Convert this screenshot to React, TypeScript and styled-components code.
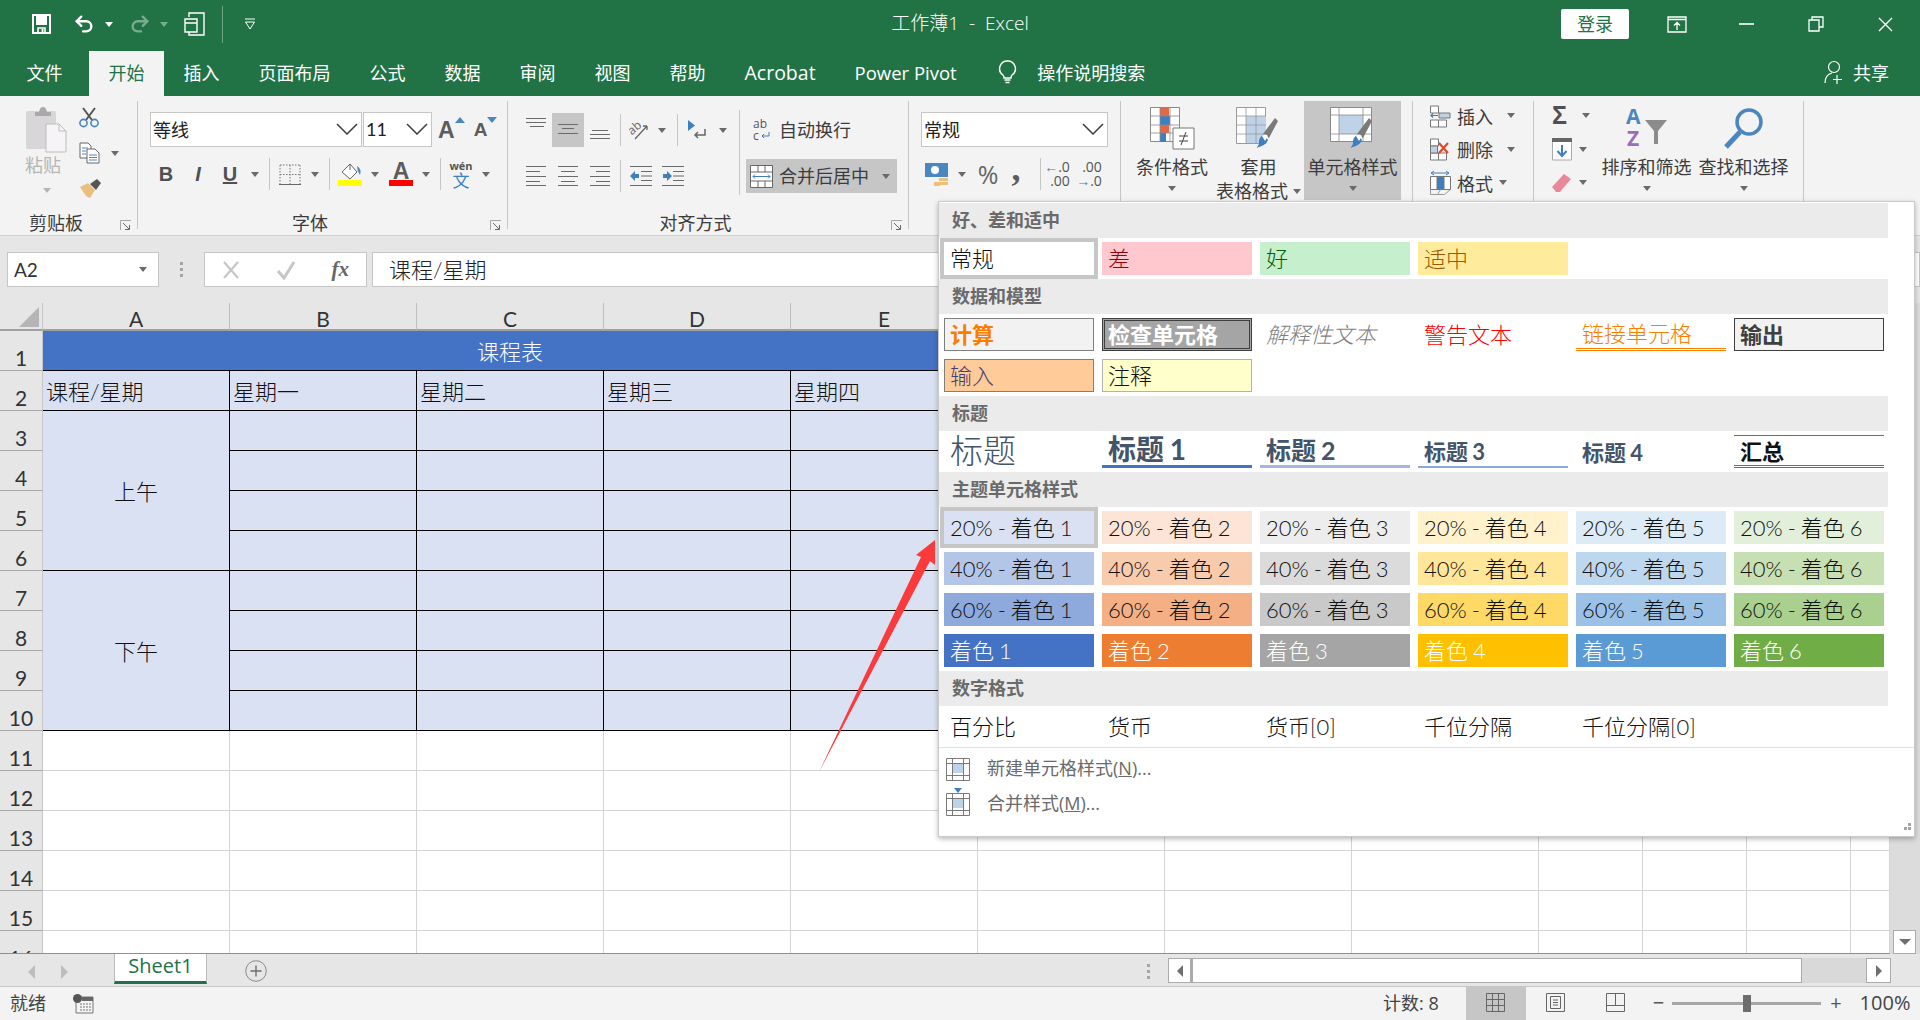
import React from "react";
import styled, { createGlobalStyle, css } from "styled-components";
import { Undo2, Redo2 } from "lucide-react";

const UI = `"Open Sans", "Noto Sans CJK SC", sans-serif`;
const CELL = `"Lato", "Noto Sans CJK SC", sans-serif`;
const GREEN = "#217346";

const Global = createGlobalStyle`
  html, body { margin: 0; padding: 0; background: #fff; }
  * { box-sizing: border-box; }
  #root { width: 1920px; height: 1020px; }
`;

const Page = styled.div`
  position: relative; width: 1920px; height: 1020px; overflow: hidden;
  display: flex; flex-direction: column; font-family: ${UI}; font-size: 18px; color: #444; font-weight: 400;
`;

const Svg = styled.svg`display: block; flex-shrink: 0;`;

/* ---- Title bar ---- */
const TitleBar = styled.div`
  height: 51px; background: ${GREEN}; color: #fff; display: grid; grid-template-columns: 1fr auto 1fr; align-items: center; padding-bottom: 3px;
`;
const Qat = styled.div`display: flex; align-items: center; padding-left: 32px;`;
const QatItem = styled.span<{ $ml?: number; $dim?: boolean }>`
  display: flex; align-items: center; margin-left: ${(p) => p.$ml ?? 0}px; opacity: ${(p) => (p.$dim ? 0.4 : 1)};
`;
const QatSep = styled.span`width: 1px; height: 37px; background: #6fa587; margin-left: 17px;`;
const Title = styled.div`color: #fff; font-size: 19px; line-height: 24px; margin-top: -3px; white-space: pre; font-weight: 300;`;
const WinCtl = styled.div`display: flex; align-items: center; justify-content: flex-end; padding-right: 27px;`;
const LoginBtn = styled.div`
  width: 68px; height: 30px; background: #fff; color: ${GREEN}; border-radius: 2px; display: flex; align-items: center; justify-content: center; font-size: 18px; font-weight: 400; padding-bottom: 2px;
`;
const WinBtn = styled.span<{ $ml: number }>`display: block; margin-left: ${(p) => p.$ml}px;`;

/* ---- Tabs ---- */
const TabBar = styled.div`height: 45px; background: ${GREEN}; display: flex; align-items: stretch; padding-left: 7px;`;
const Tab = styled.div<{ $on?: boolean; $mr?: number; $fs?: number }>`
  padding: 0 19.5px 3px; display: flex; align-items: center; white-space: nowrap; font-size: ${(p) => p.$fs ?? 18}px; margin-right: ${(p) => p.$mr ?? 0}px;
  color: ${(p) => (p.$on ? GREEN : "#fff")}; background: ${(p) => (p.$on ? "#f3f3f3" : "transparent")};
`;
const SearchHint = styled.div`display: flex; align-items: center; gap: 20px; color: #fff; margin-left: 22px; padding-bottom: 3px;`;
const Share = styled.div`display: flex; align-items: center; gap: 11px; color: #fff; margin-left: auto; padding: 0 31px 3px 0;`;

/* ---- Ribbon ---- */
const Ribbon = styled.div`height: 140px; background: #f3f3f3; border-bottom: 1px solid #d2d2d2; display: flex; align-items: flex-start; padding-top: 5px;`;
const Group = styled.section<{ $w: number }>`
  width: ${(p) => p.$w}px; height: 128px; border-right: 1px solid #c6c6c6; display: flex; flex-direction: column; flex-shrink: 0;
`;
const GroupBody = styled.div`height: 111px; display: flex; flex-shrink: 0;`;
const GroupLabel = styled.div`
  height: 20px; line-height: 20px; margin-top: 1px; display: grid; grid-template-columns: 1fr auto 1fr; align-items: center; font-size: 18px; color: #3c3c3c; padding-right: 25px; white-space: nowrap;
`;
const LauncherSlot = styled.span`justify-self: end; margin: 5px -20px 0 0;`;

const Caret = styled.span<{ $c?: string }>`
  display: block; width: 0; height: 0; flex-shrink: 0; border-left: 4.5px solid transparent; border-right: 4.5px solid transparent;
  border-top: 5px solid ${(p) => p.$c ?? "#6a6a6a"};
`;
const Tool = styled.div<{ $w: number; $on?: boolean }>`
  width: ${(p) => p.$w}px; height: 100%; display: flex; align-items: center; justify-content: center; flex-shrink: 0;
  background: ${(p) => (p.$on ? "#c6c6c6" : "transparent")};
`;
const ToolRow = styled.div<{ $mt?: number }>`display: flex; align-items: center; height: 34px; margin-top: ${(p) => p.$mt ?? 0}px;`;
const VSep = styled.span<{ $ml: number }>`width: 1px; height: 32px; background: #c6c6c6; margin-left: ${(p) => p.$ml}px; flex-shrink: 0;`;

/* clipboard */
const ClipRow = styled.div`display: flex; gap: 12px; padding: 6px 0 0 26px;`;
const PasteCol = styled.div`width: 41px; display: flex; flex-direction: column; align-items: center;`;
const PasteLabel = styled.div`color: #b5b5b5; line-height: 24px; margin: 0 0 11px -7px; white-space: nowrap;`;
const ClipTools = styled.div`display: flex; flex-direction: column; gap: 14px;`;
const ClipTool = styled.div`display: flex; align-items: center; gap: 11px;`;

/* font */
const FontWrap = styled.div`padding: 11px 0 0 12px; display: flex; flex-direction: column;`;
const ComboRow = styled.div`display: flex; align-items: center; height: 35px;`;
const Combo = styled.div<{ $w: number; $ml?: number }>`
  width: ${(p) => p.$w}px; height: 35px; margin-left: ${(p) => p.$ml ?? 0}px; background: #fff; border: 1px solid #c6c6c6; display: flex; align-items: center; justify-content: space-between;
  padding: 0 3px 2px 2px; font-family: ${CELL}; font-size: 18px; color: #222; flex-shrink: 0;
`;
const FontGrow = styled.div<{ $ml: number }>`display: flex; align-items: flex-start; margin-left: ${(p) => p.$ml}px; font: 700 23px/26px "Liberation Sans", sans-serif; color: #5c5c5c;`;
const FontSmall = styled(FontGrow)`font-size: 19px;`;
const FaceLetter = styled.span<{ $i?: boolean; $u?: boolean }>`
  font: ${(p) => (p.$i ? "italic 700" : "700")} 20px "Liberation Sans", sans-serif; color: #505050;
  text-decoration: ${(p) => (p.$u ? "underline" : "none")};
`;
const SwatchIcon = styled.div`display: flex; flex-direction: column; align-items: center; width: 24px;`;
const ColorLetter = styled.span`font: 700 23px/17px "Liberation Sans", sans-serif; color: #5c5c5c;`;
const ColorBar = styled.span<{ $c: string }>`display: block; width: 24px; height: 6px; background: ${(p) => p.$c};`;
const WenBox = styled.div`display: flex; flex-direction: column; align-items: center; line-height: 1;`;
const WenTop = styled.span`font: 700 11px/11px "Open Sans", sans-serif; color: #555;`;
const WenBottom = styled.span`font: 400 17px/17px "Noto Sans CJK SC", sans-serif; color: #3f7fc0;`;

/* alignment */
const AlignWrap = styled.div`display: flex; padding: 12px 0 0 12px;`;
const AlignLeft = styled.div`width: 219px;`;
const BigSep = styled.span`width: 1px; height: 85px; background: #c6c6c6; margin-top: -3px;`;
const AlignRight = styled.div`margin-left: 6px;`;
const WideBtn = styled.div<{ $on?: boolean }>`
  width: 151px; height: 34px; display: flex; align-items: center; white-space: nowrap; line-height: 28px;
  padding-left: ${(p) => (p.$on ? 4 : 7)}px; gap: ${(p) => (p.$on ? 6 : 9)}px; background: ${(p) => (p.$on ? "#c6c6c6" : "transparent")}; color: #3c3c3c;
`;
const CaretPad = styled.span<{ $ml: number }>`margin-left: ${(p) => p.$ml}px;`;

/* number */
const NumWrap = styled.div`padding: 11px 0 0 12px; display: flex; flex-direction: column;`;
const PercentMark = styled.span`font-size: 25px; color: #666;`;
const CommaMark = styled.span`font: 700 36px/20px "Liberation Serif", serif; color: #5c5c5c; margin-top: -13px;`;
const DecBox = styled.div`display: flex; flex-direction: column; font: 400 14px/14px "Open Sans", sans-serif; color: #555; text-align: right; white-space: pre;`;
const DecArrow = styled.span`color: #3f7fc0; font-weight: 700;`;

/* big buttons */
const BigRow = styled.div<{ $pl: number }>`display: flex; padding-left: ${(p) => p.$pl}px;`;
const BigBtn = styled.div<{ $w: number; $on?: boolean }>`
  width: ${(p) => p.$w}px; height: 99px; display: flex; flex-direction: column; align-items: center; padding-top: 6px; flex-shrink: 0; overflow: hidden;
  background: ${(p) => (p.$on ? "#c6c6c6" : "transparent")};
`;
const BigIcon = styled.div`height: 48px; display: flex; align-items: flex-start; justify-content: center; flex-shrink: 0;`;
const BigText = styled.div`line-height: 24px; height: 24px; white-space: nowrap; color: #3c3c3c; display: flex; align-items: center; gap: 5px; flex-shrink: 0;`;
const BigCaret = styled.span`margin-top: 7px;`;

/* cells */
const CellCmds = styled.div`display: flex; flex-direction: column; width: 100%; margin-top: -2px;`;
const CellCmd = styled.div`height: 33.5px; display: flex; align-items: center; padding-left: 17px; gap: 6px; color: #3c3c3c;`;
const EditCol = styled.div`width: 64px; padding-left: 18px; display: flex; flex-direction: column; flex-shrink: 0; margin-top: -2px;`;
const EditCmd = styled.div<{ $gap: number }>`height: 33.5px; display: flex; align-items: center; gap: ${(p) => p.$gap}px;`;
const Sigma = styled.span`font: 700 25px/25px "Liberation Sans", sans-serif; color: #505050; width: 18px;`;

/* ---- formula bar ---- */
const FormulaBar = styled.div`height: 67px; background: #e6e6e6; display: flex; align-items: flex-start; padding: 16px 0 0 7px;`;
const NameBox = styled.div`
  width: 152px; height: 35px; background: #fff; border: 1px solid #c6c6c6; display: flex; align-items: center; justify-content: space-between; padding: 0 11px 0 6px; font-size: 19px; color: #333; font-family: ${CELL};
`;
const BarDots = styled.div`width: 45px; height: 35px; display: flex; flex-direction: column; align-items: center; justify-content: center; gap: 3px;`;
const BarDot = styled.span`width: 3px; height: 3px; background: #a5a5a5;`;
const FnBox = styled.div`
  width: 163px; height: 35px; background: #fff; border: 1px solid #c6c6c6; display: flex; align-items: center; justify-content: space-between; padding: 0 17px;
`;
const FxMark = styled.span`font: italic 700 21px "Liberation Serif", serif; color: #666;`;
const FormulaInput = styled.div`
  flex: 1; height: 35px; margin-left: 5px; background: #fff; border: 1px solid #c6c6c6; display: flex; align-items: center; padding: 0 0 4px 16px; font: 300 22px ${CELL}; color: #222;
`;

/* ---- sheet ---- */
const SheetRow = styled.div`display: flex; height: 651px;`;
const SheetGrid = styled.div`
  width: 1890px; height: 651px; overflow: hidden; display: grid; border-bottom: 1px solid #8e8e8e;
  grid-template-columns: 43px repeat(8, 187px) 104px 104px 104px 39px;
  grid-template-rows: 28px repeat(16, 40px); font-family: ${CELL}; color: #222;
`;
const Corner = styled.div`background: #e6e6e6; border-right: 1px solid #c6c6c6; border-bottom: 2px solid #a0a0a0; display: flex; align-items: flex-end; justify-content: flex-end; padding: 0 3px 2px 0;`;
const ColHead = styled.div`
  background: #e6e6e6; border-right: 1px solid #bdbdbd; border-bottom: 2px solid #a0a0a0; display: flex; align-items: center; justify-content: center; font-size: 21px; color: #333; padding-top: 4px;
`;
const RowHead = styled.div`
  background: #e6e6e6; border-right: 1px solid #c6c6c6; border-bottom: 1px solid #a8a8a8; display: flex; align-items: flex-end; justify-content: center; font-size: 21px; line-height: 24px; color: #333;
`;
const Cell = styled.div<{ $span?: number; $rows?: number; $table?: boolean; $title?: boolean; $center?: boolean }>`
  grid-column: span ${(p) => p.$span ?? 1}; grid-row: span ${(p) => p.$rows ?? 1};
  display: flex; font-size: 22px; font-weight: 300; color: #111; white-space: nowrap;
  border-right: 1px solid #d4d4d4; border-bottom: 1px solid #d4d4d4; background: #fff;
  ${(p) => p.$table && css`background: #d9e1f2; border-right-color: #000; border-bottom-color: #000; align-items: flex-end; padding: 0 0 4px 3px; line-height: 28px;`}
  ${(p) => p.$center && css`align-items: center; justify-content: center; padding: 2px 0 0;`}
  ${(p) => p.$title && css`background: #4472c4; color: #fff; align-items: center; justify-content: center; border-right-color: #000; border-bottom-color: #000; padding: 0 0 2px;`}
`;
const VScroll = styled.div`width: 30px; height: 651px; background: #dcdcdc; display: flex; align-items: flex-end; padding: 0 4px 0 3px;`;
const ScrollBtnV = styled.div`width: 23px; height: 24px; background: #fff; border: 1px solid #ababab; display: flex; align-items: center; justify-content: center;`;

/* ---- sheet tabs ---- */
const SheetTabs = styled.div`height: 33px; background: #e6e6e6; display: flex; align-items: flex-start; padding: 0 29px 0 28px; border-bottom: 1px solid #c6c6c6;`;
const NavArrow = styled.span<{ $ml?: number; $left?: boolean }>`
  display: block; width: 0; height: 0; margin: 11px 0 0 ${(p) => p.$ml ?? 0}px; border-top: 7px solid transparent; border-bottom: 7px solid transparent;
  ${(p) => (p.$left ? "border-right: 7px solid #bdbdbd;" : "border-left: 7px solid #bdbdbd;")}
`;
const SheetTab = styled.div`
  margin-left: 46px; width: 93px; height: 30px; background: #fff; border-left: 1px solid #bcbcbc; border-right: 1px solid #bcbcbc; border-bottom: 3px solid ${GREEN};
  color: ${GREEN}; font-size: 20px; line-height: 24px; display: flex; align-items: center; justify-content: center; padding-bottom: 3px;
`;
const AddSheet = styled.span`margin: 6px 0 0 38px; display: block;`;
const TabDots = styled.div`margin: 5px 18px 0 auto; display: flex; flex-direction: column; gap: 3px; padding-top: 5px;`;
const HScroll = styled.div`display: flex; height: 25px; margin-top: 4px; width: 723px;`;
const HBtn = styled.div<{ $w: number }>`width: ${(p) => p.$w}px; height: 25px; background: #fff; border: 1px solid #ababab; display: flex; align-items: center; justify-content: center; flex-shrink: 0;`;
const HThumb = styled.div`width: 611px; background: #fff; border: 1px solid #ababab; border-left-width: 2px;`;
const HTrack = styled.div`flex: 1; background: #d9d9d9;`;
const ScrollArrow = styled.span<{ $dir: "l" | "r" | "d" }>`
  display: block; width: 0; height: 0;
  ${(p) => p.$dir === "l" && "border-top: 6px solid transparent; border-bottom: 6px solid transparent; border-right: 6px solid #6e6e6e;"}
  ${(p) => p.$dir === "r" && "border-top: 6px solid transparent; border-bottom: 6px solid transparent; border-left: 6px solid #6e6e6e;"}
  ${(p) => p.$dir === "d" && "border-left: 6px solid transparent; border-right: 6px solid transparent; border-top: 6px solid #6e6e6e;"}
`;

/* ---- status bar ---- */
const StatusBar = styled.div`height: 33px; background: #f3f3f3; display: flex; align-items: center; padding: 0 11px 0 10px; font-size: 18px; color: #444;`;
const StatusText = styled.span<{ $ml?: number }>`margin: -4px 0 0 ${(p) => p.$ml ?? 0}px; white-space: nowrap;`;
const ViewBtn = styled.div<{ $on?: boolean }>`width: 60px; height: 33px; display: flex; align-items: center; justify-content: center; padding-bottom: 2px; background: ${(p) => (p.$on ? "#c6c6c6" : "transparent")};`;
const SliderTrack = styled.div`position: relative; width: 149px; height: 3px; background: #a6a6a6; margin: 0 9px 0 8px;`;
const SliderThumb = styled.span`position: absolute; left: 71px; top: -7px; width: 8px; height: 17px; background: #6d6d6d;`;
const ZoomSign = styled.span`font-size: 20px; color: #555; margin-top: -3px;`;
const ZoomPct = styled.span`margin: -3px 0 0 18px; font-size: 20px;`;

/* ---- cell styles popup ---- */
const Popup = styled.div`
  position: absolute; left: 938px; top: 201px; width: 977px; height: 636px; background: #fff; border: 1px solid #c9c9c9; box-shadow: 0 2px 5px rgba(0,0,0,.28); padding-top: 1px; display: flex; flex-direction: column; z-index: 5;
`;
const SectionHead = styled.div`
  width: 949px; height: 35px; background: #ebebeb; display: flex; align-items: center; padding: 0 0 4px 13px; font-size: 18px; font-weight: 700; color: #6a6a6a;
`;
const SectionRows = styled.div`display: grid; grid-template-columns: repeat(6, 150px); column-gap: 8px; row-gap: 8px; padding: 4px 5px; width: 949px;`;
const StyleCell = styled.div<{ $v: string; $sel?: boolean }>`
  height: 33px; display: flex; align-items: center; padding: 0 0 3px 6px; white-space: nowrap; font-size: 22px; font-weight: 300; word-spacing: -1px; color: #111; font-family: ${CELL};
  ${(p) => p.$sel && css`box-shadow: 0 0 0 4px #c6c6c6;`}
  ${(p) => variants[p.$v]}
`;
const PopupLine = styled.div`height: 1px; background: #e1e1e1; margin-bottom: 1px;`;
const MenuItem = styled.div`height: 35px; display: flex; align-items: center; padding-left: 7px; gap: 17px; font-size: 18px; color: #6a6a6a;`;
const Grip = styled.div`margin: auto 3px 2px auto; display: grid; grid-template-columns: repeat(3, 3px); grid-template-rows: repeat(3, 3px); gap: 1px;`;
const GripDot = styled.span<{ $show: boolean }>`background: ${(p) => (p.$show ? "#a5a5a5" : "transparent")};`;

const Annotation = styled.svg`position: absolute; left: 810px; top: 525px; z-index: 6;`;

const variants: Record<string, any> = {
  normal: css`background: #fff;`,
  bad: css`background: #ffc7ce; color: #9c0006;`,
  good: css`background: #c6efce; color: #006100;`,
  neutral: css`background: #ffeb9c; color: #9c5700;`,
  calc: css`background: #f2f2f2; color: #fa7d00; font-weight: 700; border: 1px solid #7f7f7f; padding-left: 5px;`,
  check: css`background: #a5a5a5; color: #fff; font-weight: 700; border: 3px double #3f3f3f; padding-left: 3px;`,
  explain: css`color: #7f7f7f; font-style: italic;`,
  warn: css`color: #ff0000;`,
  link: css`color: #fa7d00; border-bottom: 3px double #ff8001;`,
  output: css`background: #f2f2f2; color: #3f3f3f; font-weight: 700; border: 1px solid #3f3f3f; padding-left: 5px;`,
  input: css`background: #ffcc99; color: #3f3f76; border: 1px solid #7f7f7f; padding-left: 5px;`,
  note: css`background: #ffffcc; color: #111; border: 1px solid #b2b2b2; padding-left: 5px;`,
  h0: css`color: #44546a; font-size: 33px; font-weight: 300; padding-bottom: 6px;`,
  h1: css`color: #44546a; font-size: 28px; font-weight: 700; border-bottom: 3px solid #4472c4; padding-bottom: 4px;`,
  h2: css`color: #44546a; font-size: 25px; font-weight: 700; border-bottom: 3px solid #a2b8e1; padding-bottom: 2px;`,
  h3: css`color: #44546a; font-size: 22px; font-weight: 700; border-bottom: 2px solid #8ea9db; padding-bottom: 1px;`,
  h4: css`color: #44546a; font-size: 22px; font-weight: 700; padding-bottom: 1px;`,
  total: css`color: #111; font-weight: 700; border-top: 1px solid #4472c4; border-bottom: 3px double #4472c4; padding-bottom: 1px;`,
  number: css`background: #fff;`,
};
const fill = (bg: string, fg = "#111") => css`background: ${bg}; color: ${fg};`;
const themeColors = [
  ["#d9e1f2", "#fce4d6", "#ededed", "#fff2cc", "#ddebf7", "#e2efda"],
  ["#b4c6e7", "#f8cbad", "#dbdbdb", "#ffe699", "#bdd7ee", "#c6e0b4"],
  ["#8ea9db", "#f4b084", "#c9c9c9", "#ffd966", "#9bc2e6", "#a9d08e"],
  ["#4472c4", "#ed7d31", "#a5a5a5", "#ffc000", "#5b9bd5", "#70ad47"],
];
const prefixes = ["20% - ", "40% - ", "60% - ", ""];
themeColors.forEach((r, i) => r.forEach((c, j) => { variants[`t${i}${j}`] = fill(c, i === 3 ? "#fff" : "#111"); }));

type StyleDef = [string, string];
const sections: { title: string; cells: StyleDef[] }[] = [
  { title: "好、差和适中", cells: [["常规", "normal"], ["差", "bad"], ["好", "good"], ["适中", "neutral"]] },
  { title: "数据和模型", cells: [["计算", "calc"], ["检查单元格", "check"], ["解释性文本", "explain"], ["警告文本", "warn"], ["链接单元格", "link"], ["输出", "output"], ["输入", "input"], ["注释", "note"]] },
  { title: "标题", cells: [["标题", "h0"], ["标题 1", "h1"], ["标题 2", "h2"], ["标题 3", "h3"], ["标题 4", "h4"], ["汇总", "total"]] },
  { title: "主题单元格样式", cells: themeColors.flatMap((r, i) => r.map((_, j) => [`${prefixes[i]}着色 ${j + 1}`, `t${i}${j}`] as StyleDef)) },
  { title: "数字格式", cells: [["百分比", "number"], ["货币", "number"], ["货币[0]", "number"], ["千位分隔", "number"], ["千位分隔[0]", "number"]] },
];

/* ---- icons ---- */
const Chevron = () => (
  <Svg width="22" height="12" viewBox="0 0 22 12"><path d="M1 1l10 10L21 1" fill="none" stroke="#3c3c3c" strokeWidth="1.5" /></Svg>
);
const Launcher = () => (
  <Svg width="12" height="11" viewBox="0 0 12 11"><path d="M.5 10V.5H11" fill="none" stroke="#a6a6a6" /><path d="M3 3l6 6M5 9.500h4.500V5" fill="none" stroke="#666" /></Svg>
);
const SaveIcon = () => (
  <Svg width="19" height="20" viewBox="0 0 19 20"><path d="M1 1h17v18H1z" fill="none" stroke="#fff" strokeWidth="2" /><path d="M4 1h11v10H4z" fill="#fff" /><path d="M6 19v-5h7v5" fill="none" stroke="#fff" strokeWidth="1.6" /><path d="M9.500 15h2v3h-2z" fill="#fff" /></Svg>
);
const TouchIcon = () => (
  <Svg width="21" height="24" viewBox="0 0 21 24"><path d="M5 5V1h15v22H5v-3" fill="none" stroke="#fff" strokeWidth="1.4" /><path d="M1 7h12v13H1zM1 11h12" fill="none" stroke="#fff" strokeWidth="1.4" /></Svg>
);
const QatMore = () => (
  <Svg width="12" height="12" viewBox="0 0 12 12"><path d="M1 1h10M1.500 4h9L6 11z" fill="none" stroke="#fff" strokeWidth="1" /></Svg>
);
const RibbonDisplay = () => (
  <Svg width="20" height="17" viewBox="0 0 20 17"><path d="M1 1h18v15H1zM1 3.500h18M10 14V7M7 9.500L10 6.500l3 3" fill="none" stroke="#fff" strokeWidth="1.3" /></Svg>
);
const Minimize = () => <Svg width="15" height="2" viewBox="0 0 15 2"><path d="M0 1h15" stroke="#fff" strokeWidth="1.6" /></Svg>;
const Restore = () => (
  <Svg width="16" height="16" viewBox="0 0 16 16"><path d="M1 4h10v11H1zM4 4V1h11v10h-4" fill="none" stroke="#fff" strokeWidth="1.3" /></Svg>
);
const CloseIcon = () => <Svg width="15" height="15" viewBox="0 0 15 15"><path d="M1 1l13 13M14 1L1 14" stroke="#fff" strokeWidth="1.4" /></Svg>;
const Bulb = () => (
  <Svg width="19" height="24" viewBox="0 0 19 24"><path d="M9.500 1a7.700 7.700 0 0 0-4.600 14c.8.7 1.100 1.600 1.100 3h7c0-1.400.3-2.300 1.100-3A7.700 7.700 0 0 0 9.500 1z" fill="none" stroke="#fff" strokeWidth="1.4" /><path d="M6.500 20h6M7.500 22.500h4" stroke="#fff" strokeWidth="1.6" /></Svg>
);
const PersonPlus = () => (
  <Svg width="18" height="24" viewBox="0 0 18 24"><circle cx="10" cy="7" r="5.500" fill="none" stroke="#fff" strokeWidth="1.2" /><path d="M1 23c0-6 3-9 7-10M13 15v9M9 19.500h9" fill="none" stroke="#fff" strokeWidth="1.2" /></Svg>
);
const PasteIcon = () => (
  <Svg width="41" height="46" viewBox="0 0 41 46"><path d="M0 6q0-2 2-2h26q2 0 2 2v34q0 2-2 2H2q-2 0-2-2z" fill="#d9d6d9" /><path d="M9 5h4q1-5 4-5t4 5h4v4H9z" fill="#a9a9a9" /><path d="M20 17h13l7 7v21H20z" fill="#f6f4f6" stroke="#bdbdbd" /><path d="M33 17v7h7" fill="none" stroke="#bdbdbd" /></Svg>
);
const CutIcon = () => (
  <Svg width="20" height="21" viewBox="0 0 20 21"><path d="M7 13L16 1M13 13L4 1" stroke="#555" strokeWidth="2" /><circle cx="4.500" cy="16" r="3.600" fill="none" stroke="#4a86c0" strokeWidth="1.6" /><circle cx="15.500" cy="16" r="3.600" fill="none" stroke="#4a86c0" strokeWidth="1.6" /></Svg>
);
const CopyIcon = () => (
  <Svg width="21" height="22" viewBox="0 0 21 22"><path d="M1 1h8l3 3v12H1z" fill="#fff" stroke="#666" /><path d="M8 7h8l4 4v10H8z" fill="#fff" stroke="#666" /><path d="M3 6h6M3 9h4M3 12h4M10 13h8M10 15.500h8M10 18h8" stroke="#4a86c0" /></Svg>
);
const PainterIcon = () => (
  <Svg width="23" height="20" viewBox="0 0 23 20"><path d="M1 9l8-4 7 7-5 8-4-2z" fill="#e9bf7e" /><path d="M11 6l7-5 4 4-5 7z" fill="#555" /></Svg>
);
const BorderIcon = () => (
  <Svg width="22" height="21" viewBox="0 0 22 21"><path d="M1 1h20M1 10.500h20M1 1v19M11 1v19M21 1v19" fill="none" stroke="#777" strokeDasharray="1.5 1.5" /><path d="M0 20.500h22" stroke="#666" /></Svg>
);
const BucketIcon = () => (
  <Svg width="24" height="17" viewBox="0 0 24 17"><path d="M4 9l8-8 7 8-7 7z" fill="#fff" stroke="#666" /><path d="M12 1v6" stroke="#666" /><path d="M19 3q5 3 3 9-3-4-3-9z" fill="#4a86c0" /></Svg>
);
const Lines = ({ rows, w = 20, h, c = "#6a6a6a" }: { rows: [number, number, number][]; w?: number; h: number; c?: string }) => (
  <Svg width={w} height={h} viewBox={`0 0 ${w} ${h}`}>{rows.map(([x, y, l], i) => <rect key={i} x={x} y={y} width={l} height="1" fill={c} />)}</Svg>
);
const OrientIcon = () => (
  <Svg width="20" height="20" viewBox="0 0 20 20"><text x="0" y="12" fontSize="12" fontFamily="Open Sans" fill="#666" transform="rotate(-40 6 10)">ab</text><path d="M6 19L18 6M18 6l-4 0M18 6v4" fill="none" stroke="#666" strokeWidth="1.3" /></Svg>
);
const IndentWrap = () => (
  <Svg width="18" height="20" viewBox="0 0 18 20"><path d="M0 0l7 5.500L0 11z" fill="#3f7fc0" /><path d="M17 9v6H7M10 12l-3 3 3 3" fill="none" stroke="#666" strokeWidth="1.5" /></Svg>
);
const WrapText = () => (
  <Svg width="17" height="22" viewBox="0 0 17 22"><text x="0" y="9" fontSize="12" fontFamily="Open Sans" fill="#555">ab</text><text x="0" y="21" fontSize="12" fontFamily="Open Sans" fill="#555">c</text><path d="M16 13v4H9M11 15l-2 2 2 2" fill="none" stroke="#3f7fc0" /></Svg>
);
const MergeIcon = () => (
  <Svg width="23" height="23" viewBox="0 0 23 23"><path d="M.5.500h22v22H.5z" fill="#fff" stroke="#666" /><path d="M0 7h23M0 16h23M8 0v7M15 0v7M8 16v7M15 16v7" stroke="#666" /><path d="M3 11.500h17M5 9.500l-2 2 2 2M18 9.500l2 2-2 2" fill="none" stroke="#3f7fc0" /></Svg>
);
const IndentIcon = ({ out }: { out?: boolean }) => (
  <Svg width="22" height="20" viewBox="0 0 22 20">
    <path d="M0 .5h22M11 5.500h11M11 10h11M11 14.500h11M0 19.500h22" stroke="#6a6a6a" />
    <path d={out ? "M0 10l5-5v3h4v4H5v3z" : "M10 10L5 5v3H1v4h4v3z"} fill="#3f7fc0" />
  </Svg>
);
const CurrencyIcon = () => (
  <Svg width="23" height="23" viewBox="0 0 23 23"><path d="M0 0h23v14H0z" fill="#4a86c0" /><circle cx="10" cy="7" r="4" fill="#fff" /><path d="M14 15h9v3h-9zM14 19h9v3h-9zM9 19h6v4H9z" fill="#ecc07a" /></Svg>
);
const CondIcon = () => (
  <Svg width="45" height="43" viewBox="0 0 45 43">
    <path d="M.5.500h29v34H.5z" fill="#fff" stroke="#8a8a8a" />
    <path d="M10 1h9v8h-9zM10 18h9v8h-9z" fill="#e0694a" /><path d="M10 9h10v9H10zM10 26h6v9h-6z" fill="#3f7fc0" />
    <path d="M10 1v34M20 1v34M0 9h30M0 18h30M0 26h30" stroke="#8a8a8a" strokeWidth=".8" fill="none" />
    <path d="M23 21h21v21H23z" fill="#fff" stroke="#777" /><path d="M29 29h9M29 34h9M36 25l-5 13" stroke="#444" />
  </Svg>
);
const Brush = ({ x, y }: { x: number; y: number }) => (
  <g transform={`translate(${x} ${y})`}><path d="M4 28q-1-7 5-9l4 5q-2 6-13 8 3-1 4-4z" fill="#3f7fc0" /><path d="M8 18L20 2l3 3-9 17z" fill="#7a7a7a" /><path d="M7 20q3-3 6 0l-3 5z" fill="#fff" /></g>
);
const TableStyleIcon = () => (
  <Svg width="46" height="43" viewBox="0 0 46 43">
    <path d="M.5.500h29v36H.5z" fill="#fff" stroke="#9a9a9a" /><path d="M10 9h20v27H10z" fill="#bed2e8" />
    <path d="M10 1v36M20 1v36M0 9h30M0 18h30M0 27h30" stroke="#9a9a9a" strokeWidth=".8" fill="none" />
    <Brush x={19} y={9} />
  </Svg>
);
const CellStyleIcon = () => (
  <Svg width="46" height="43" viewBox="0 0 46 43">
    <path d="M.5.500h41v34H.5z" fill="#fff" stroke="#8a8a8a" /><path d="M9 8h24v19H9z" fill="#bed2e8" />
    <path d="M9 1v33M33 1v33M0 8h42M0 27h42" stroke="#8a8a8a" strokeWidth=".8" fill="none" />
    <Brush x={19} y={9} />
  </Svg>
);
const SmallGrid = ({ kind }: { kind: "ins" | "del" | "fmt" }) => (
  <Svg width="21" height="24" viewBox="0 0 21 24">
    {kind !== "fmt" && <path d="M.5 2h8v7h-8zM.5 16h8v7h-8zM8.500 16h8v7h-8z" fill="#fff" stroke="#777" />}
    {kind === "ins" && <><path d="M9 9h11v5H9z" fill="#bed2e8" stroke="#777" /><path d="M8 11.500H1M3 9.500l-2 2 2 2" fill="none" stroke="#3f7fc0" strokeWidth="1.200" /></>}
    {kind === "del" && <><path d="M.5 9h7v7h-7z" fill="#bed2e8" stroke="#777" /><path d="M9 6l9 10M18 6L9 16" stroke="#e0492a" strokeWidth="2.200" /></>}
    {kind === "fmt" && <>
      <path d="M1 2h18M4 0l-3 2 3 2M16 0l3 2-3 2" fill="none" stroke="#3f7fc0" />
      <path d="M.5 5.500h20v13H.5z" fill="#fff" stroke="#777" /><path d="M7 6h7v12H7z" fill="#3f7fc0" />
      <path d="M7 5.500v13M14 5.500v13" stroke="#777" /><path d="M.5 18.500v5h7l3-5M20.500 18.500l-6 5H7.500" fill="none" stroke="#999" />
    </>}
  </Svg>
);
const FillDown = () => (
  <Svg width="20" height="23" viewBox="0 0 20 23"><path d="M.5 3h19v19H.5z" fill="#fff" stroke="#aaa" /><path d="M0 0h20v4H0z" fill="#666" /><path d="M10 7v11M5.500 13l4.500 5 4.500-5" fill="none" stroke="#3f7fc0" strokeWidth="2" /></Svg>
);
const Eraser = () => (
  <Svg width="20" height="20" viewBox="0 0 20 20"><path d="M0 14L12 1l7 5L8 19H4z" fill="#e8899a" /></Svg>
);
const SortIcon = () => (
  <Svg width="42" height="40" viewBox="0 0 42 40">
    <text x="0" y="17" fontSize="21" fontWeight="700" fontFamily="Open Sans" fill="#4a86c0">A</text>
    <text x="1" y="39" fontSize="21" fontWeight="700" fontFamily="Open Sans" fill="#9b6bbd">Z</text>
    <path d="M19 13h22l-9 11v13h-4V24z" fill="#8c8c8c" />
  </Svg>
);
const FindIcon = () => (
  <Svg width="40" height="42" viewBox="0 0 40 42"><circle cx="25" cy="15" r="12" fill="none" stroke="#4a86c0" strokeWidth="3.500" /><path d="M16 25L2 40" stroke="#4a86c0" strokeWidth="5" /></Svg>
);
const CrossMark = () => <Svg width="18" height="20" viewBox="0 0 18 20"><path d="M2 2l14 16M16 2L2 18" stroke="#c6c6c6" strokeWidth="2.200" /></Svg>;
const CheckMark = () => <Svg width="20" height="20" viewBox="0 0 20 20"><path d="M2 11l6 7 10-16" fill="none" stroke="#c6c6c6" strokeWidth="3" /></Svg>;
const CornerMark = () => <Svg width="20" height="20" viewBox="0 0 20 20"><path d="M20 0v20H0z" fill="#b5b5b5" /></Svg>;
const PlusCircle = () => (
  <Svg width="22" height="22" viewBox="0 0 22 22"><circle cx="11" cy="11" r="10.300" fill="none" stroke="#8a8a8a" /><path d="M11 5.500v11M5.500 11h11" stroke="#6e6e6e" strokeWidth="1.400" /></Svg>
);
const MacroIcon = () => (
  <Svg width="21" height="20" viewBox="0 0 21 20"><path d="M3 3h17v16H3z" fill="#f3f3f3" stroke="#777" /><path d="M9 3h11v4H9z" fill="#666" /><circle cx="4.500" cy="4.500" r="4.500" fill="#555" /><path d="M7 10h11M7 13h11M7 16h11" stroke="#777" strokeDasharray="2 1" /></Svg>
);
const ViewNormal = () => <Svg width="19" height="19" viewBox="0 0 19 19"><path d="M.5.500h18v18H.5zM.5 6.500h18M.5 12.500h18M6.500.5v18M12.500.5v18" fill="none" stroke="#666" /></Svg>;
const ViewPage = () => <Svg width="19" height="19" viewBox="0 0 19 19"><path d="M.5.500h18v18H.5zM4.500 3.500h10v12h-10z" fill="none" stroke="#666" /><path d="M7 7h5M7 9.500h5M7 12h5" stroke="#666" /></Svg>;
const ViewBreak = () => <Svg width="19" height="19" viewBox="0 0 19 19"><path d="M.5.500h18v18H.5zM.5 12.500h18M9.500.5v12" fill="none" stroke="#666" /></Svg>;
const MenuNewIcon = ({ merge }: { merge?: boolean }) => (
  <Svg width="24" height="28" viewBox="0 0 24 28">
    {merge && <path d="M8 0h8l-4 5z" fill="#3f7fc0" />}
    <path d="M7 10h10v10H7z" fill="#bed2e8" />
    <path d="M.5 5.500h23v22H.5zM.5 10.500h23M.5 22.500h23M6.500 5.500v22M17.500 5.500v22" fill="none" stroke="#7a7a7a" />
  </Svg>
);

const alignV = {
  top: [[0, 5, 20], [0, 9, 20], [4, 13, 14]] as [number, number, number][],
  mid: [[0, 11, 20], [4, 15, 12], [0, 20, 20]] as [number, number, number][],
  bot: [[2, 17, 16], [0, 21, 20], [0, 25, 20]] as [number, number, number][],
};
const alignH = {
  l: [[0, 1, 20], [0, 6, 14], [0, 11, 20], [0, 16, 14], [0, 20, 20]] as [number, number, number][],
  c: [[0, 1, 20], [3, 6, 14], [0, 11, 20], [3, 16, 14], [0, 20, 20]] as [number, number, number][],
  r: [[0, 1, 20], [6, 6, 14], [0, 11, 20], [6, 16, 14], [0, 20, 20]] as [number, number, number][],
};

const tabs: [string, number?][] = [["插入"], ["页面布局"], ["公式"], ["数据"], ["审阅"], ["视图"], ["帮助"], ["Acrobat", 19.5], ["Power Pivot", 18.5]];
const colHeads = ["A", "B", "C", "D", "E", "F", "G", "H", "I", "J", "K", "L"];
const week = ["课程/星期", "星期一", "星期二", "星期三", "星期四"];
const blanksRight = Array.from({ length: 7 });

function SheetBody() {
  const rows: React.ReactNode[] = [];
  for (let r = 1; r <= 16; r++) {
    rows.push(<RowHead key={`h${r}`}>{r}</RowHead>);
    if (r === 1) rows.push(<Cell key="title" $span={5} $title>课程表</Cell>);
    if (r === 2) week.forEach((w) => rows.push(<Cell key={w} $table>{w}</Cell>));
    if (r >= 3 && r <= 10) {
      if (r === 3) rows.push(<Cell key="am" $table $center $rows={4}>上午</Cell>);
      if (r === 7) rows.push(<Cell key="pm" $table $center $rows={4}>下午</Cell>);
      for (let c = 0; c < 4; c++) rows.push(<Cell key={`t${r}-${c}`} $table />);
    }
    if (r > 10) for (let c = 0; c < 5; c++) rows.push(<Cell key={`b${r}-${c}`} />);
    blanksRight.forEach((_, c) => rows.push(<Cell key={`e${r}-${c}`} />));
  }
  return <>{rows}</>;
}

export default function App() {
  return (
    <Page>
      <Global />
      <TitleBar>
        <Qat>
          <SaveIcon />
          <QatItem $ml={22}><Undo2 size={22} color="#fff" strokeWidth={2.6} /></QatItem>
          <QatItem $ml={10}><Caret $c="#fff" /></QatItem>
          <QatItem $ml={16} $dim><Redo2 size={22} color="#fff" strokeWidth={2.6} /></QatItem>
          <QatItem $ml={9} $dim><Caret $c="#fff" /></QatItem>
          <QatItem $ml={16}><TouchIcon /></QatItem>
          <QatSep />
          <QatItem $ml={21}><QatMore /></QatItem>
        </Qat>
        <Title>{"工作薄1  -  Excel"}</Title>
        <WinCtl>
          <LoginBtn>登录</LoginBtn>
          <WinBtn $ml={38}><RibbonDisplay /></WinBtn>
          <WinBtn $ml={52}><Minimize /></WinBtn>
          <WinBtn $ml={54}><Restore /></WinBtn>
          <WinBtn $ml={54}><CloseIcon /></WinBtn>
        </WinCtl>
      </TitleBar>

      <TabBar>
        <Tab $mr={7}>文件</Tab>
        <Tab $on>开始</Tab>
        {tabs.map(([t, f]) => <Tab key={t} $fs={f}>{t}</Tab>)}
        <SearchHint><Bulb />操作说明搜索</SearchHint>
        <Share><PersonPlus />共享</Share>
      </TabBar>

      <Ribbon>
        <Group $w={138}>
          <GroupBody>
            <ClipRow>
              <PasteCol>
                <PasteIcon />
                <PasteLabel>粘贴</PasteLabel>
                <Caret $c="#b5b5b5" />
              </PasteCol>
              <ClipTools>
                <ClipTool><CutIcon /></ClipTool>
                <ClipTool><CopyIcon /><Caret /></ClipTool>
                <ClipTool><PainterIcon /></ClipTool>
              </ClipTools>
            </ClipRow>
          </GroupBody>
          <GroupLabel><span /><span>剪贴板</span><LauncherSlot><Launcher /></LauncherSlot></GroupLabel>
        </Group>

        <Group $w={370}>
          <GroupBody>
            <FontWrap>
              <ComboRow>
                <Combo $w={212}>等线<Chevron /></Combo>
                <Combo $w={69} $ml={1}>11<Chevron /></Combo>
                <FontGrow $ml={6}>A<Svg width="10" height="6" viewBox="0 0 10 6"><path d="M5 0l5 6H0z" fill="#4a86c0" /></Svg></FontGrow>
                <FontSmall $ml={9}>A<Svg width="10" height="6" viewBox="0 0 10 6"><path d="M5 6l5-6H0z" fill="#4a86c0" /></Svg></FontSmall>
              </ComboRow>
              <ToolRow $mt={10}>
                <Tool $w={32}><FaceLetter>B</FaceLetter></Tool>
                <Tool $w={32}><FaceLetter $i>I</FaceLetter></Tool>
                <Tool $w={32}><FaceLetter $u>U</FaceLetter></Tool>
                <Tool $w={18}><Caret /></Tool>
                <VSep $ml={5} />
                <Tool $w={40}><BorderIcon /></Tool>
                <Tool $w={10}><Caret /></Tool>
                <VSep $ml={9} />
                <Tool $w={40}><SwatchIcon><BucketIcon /><ColorBar $c="#ffff00" /></SwatchIcon></Tool>
                <Tool $w={10}><Caret /></Tool>
                <Tool $w={42}><SwatchIcon><ColorLetter>A</ColorLetter><ColorBar $c="#ff0000" /></SwatchIcon></Tool>
                <Tool $w={8}><Caret /></Tool>
                <VSep $ml={10} />
                <Tool $w={40}><WenBox><WenTop>wén</WenTop><WenBottom>文</WenBottom></WenBox></Tool>
                <Tool $w={10}><Caret /></Tool>
              </ToolRow>
            </FontWrap>
          </GroupBody>
          <GroupLabel><span /><span>字体</span><LauncherSlot><Launcher /></LauncherSlot></GroupLabel>
        </Group>

        <Group $w={401}>
          <GroupBody>
            <AlignWrap>
              <AlignLeft>
                <ToolRow>
                  <Tool $w={32}><Lines rows={alignV.top} h={34} /></Tool>
                  <Tool $w={32} $on><Lines rows={alignV.mid} h={34} /></Tool>
                  <Tool $w={32}><Lines rows={alignV.bot} h={34} /></Tool>
                  <VSep $ml={4} />
                  <Tool $w={36}><OrientIcon /></Tool>
                  <Tool $w={10}><Caret /></Tool>
                  <VSep $ml={10} />
                  <Tool $w={38}><IndentWrap /></Tool>
                  <Tool $w={14}><Caret /></Tool>
                </ToolRow>
                <ToolRow $mt={12}>
                  <Tool $w={32}><Lines rows={alignH.l} h={22} /></Tool>
                  <Tool $w={32}><Lines rows={alignH.c} h={22} /></Tool>
                  <Tool $w={32}><Lines rows={alignH.r} h={22} /></Tool>
                  <VSep $ml={4} />
                  <Tool $w={40}><IndentIcon out /></Tool>
                  <Tool $w={24}><IndentIcon /></Tool>
                </ToolRow>
              </AlignLeft>
              <BigSep />
              <AlignRight>
                <WideBtn><WrapText />自动换行</WideBtn>
                <ToolRow $mt={12}>
                  <WideBtn $on><MergeIcon />合并后居中<CaretPad $ml={7}><Caret /></CaretPad></WideBtn>
                </ToolRow>
              </AlignRight>
            </AlignWrap>
          </GroupBody>
          <GroupLabel><span /><span>对齐方式</span><LauncherSlot><Launcher /></LauncherSlot></GroupLabel>
        </Group>

        <Group $w={212}>
          <GroupBody>
            <NumWrap>
              <Combo $w={187}>常规<Chevron /></Combo>
              <ToolRow $mt={10}>
                <Tool $w={30}><CurrencyIcon /></Tool>
                <Tool $w={22}><Caret /></Tool>
                <Tool $w={30}><PercentMark>%</PercentMark></Tool>
                <Tool $w={26}><CommaMark>,</CommaMark></Tool>
                <VSep $ml={11} />
                <Tool $w={32}><DecBox><span><DecArrow>←</DecArrow>.0</span><span>.00</span></DecBox></Tool>
                <Tool $w={32}><DecBox><span>.00</span><span><DecArrow>→</DecArrow>.0</span></DecBox></Tool>
              </ToolRow>
            </NumWrap>
          </GroupBody>
          <GroupLabel><span /><span>数字</span><span /></GroupLabel>
        </Group>

        <Group $w={292}>
          <GroupBody>
            <BigRow $pl={10}>
              <BigBtn $w={82}>
                <BigIcon><CondIcon /></BigIcon>
                <BigText>条件格式</BigText>
                <BigCaret><Caret /></BigCaret>
              </BigBtn>
              <BigBtn $w={91}>
                <BigIcon><TableStyleIcon /></BigIcon>
                <BigText>套用</BigText>
                <BigText>表格格式<Caret /></BigText>
              </BigBtn>
              <BigBtn $w={97} $on>
                <BigIcon><CellStyleIcon /></BigIcon>
                <BigText>单元格样式</BigText>
                <BigCaret><Caret /></BigCaret>
              </BigBtn>
            </BigRow>
          </GroupBody>
          <GroupLabel><span /><span>样式</span><span /></GroupLabel>
        </Group>

        <Group $w={121}>
          <GroupBody>
            <CellCmds>
              <CellCmd><SmallGrid kind="ins" />插入<CaretPad $ml={8}><Caret /></CaretPad></CellCmd>
              <CellCmd><SmallGrid kind="del" />删除<CaretPad $ml={8}><Caret /></CaretPad></CellCmd>
              <CellCmd><SmallGrid kind="fmt" />格式<CaretPad $ml={0}><Caret /></CaretPad></CellCmd>
            </CellCmds>
          </GroupBody>
          <GroupLabel><span /><span>单元格</span><span /></GroupLabel>
        </Group>

        <Group $w={270}>
          <GroupBody>
            <EditCol>
              <EditCmd $gap={12}><Sigma>Σ</Sigma><Caret /></EditCmd>
              <EditCmd $gap={7}><FillDown /><Caret /></EditCmd>
              <EditCmd $gap={7}><Eraser /><Caret /></EditCmd>
            </EditCol>
            <BigBtn $w={97}>
              <BigIcon><SortIcon /></BigIcon>
              <BigText>排序和筛选</BigText>
              <BigCaret><Caret /></BigCaret>
            </BigBtn>
            <BigBtn $w={97}>
              <BigIcon><FindIcon /></BigIcon>
              <BigText>查找和选择</BigText>
              <BigCaret><Caret /></BigCaret>
            </BigBtn>
          </GroupBody>
          <GroupLabel><span /><span>编辑</span><span /></GroupLabel>
        </Group>
      </Ribbon>

      <FormulaBar>
        <NameBox>A2<Caret /></NameBox>
        <BarDots><BarDot /><BarDot /><BarDot /></BarDots>
        <FnBox><CrossMark /><CheckMark /><FxMark>fx</FxMark></FnBox>
        <FormulaInput>课程/星期</FormulaInput>
      </FormulaBar>

      <SheetRow>
        <SheetGrid>
          <Corner><CornerMark /></Corner>
          {colHeads.map((c) => <ColHead key={c}>{c}</ColHead>)}
          <SheetBody />
        </SheetGrid>
        <VScroll><ScrollBtnV><ScrollArrow $dir="d" /></ScrollBtnV></VScroll>
      </SheetRow>

      <SheetTabs>
        <NavArrow $left />
        <NavArrow $ml={26} />
        <SheetTab>Sheet1</SheetTab>
        <AddSheet><PlusCircle /></AddSheet>
        <TabDots><BarDot /><BarDot /><BarDot /></TabDots>
        <HScroll>
          <HBtn $w={23}><ScrollArrow $dir="l" /></HBtn>
          <HThumb />
          <HTrack />
          <HBtn $w={25}><ScrollArrow $dir="r" /></HBtn>
        </HScroll>
      </SheetTabs>

      <StatusBar>
        <StatusText>就绪</StatusText>
        <QatItem $ml={27}><MacroIcon /></QatItem>
        <StatusText $ml={1289}>计数: 8</StatusText>
        <QatItem $ml={27}>
          <ViewBtn $on><ViewNormal /></ViewBtn>
          <ViewBtn><ViewPage /></ViewBtn>
          <ViewBtn><ViewBreak /></ViewBtn>
        </QatItem>
        <QatItem $ml={7}>
          <ZoomSign>−</ZoomSign>
          <SliderTrack><SliderThumb /></SliderTrack>
          <ZoomSign>+</ZoomSign>
          <ZoomPct>100%</ZoomPct>
        </QatItem>
      </StatusBar>

      <Popup>
        {sections.map((s) => (
          <React.Fragment key={s.title}>
            <SectionHead>{s.title}</SectionHead>
            <SectionRows>
              {s.cells.map(([label, v], i) => (
                <StyleCell key={label + i} $v={v} $sel={i === 0 && (s.title === "好、差和适中" || s.title === "主题单元格样式")}>{label}</StyleCell>
              ))}
            </SectionRows>
          </React.Fragment>
        ))}
        <PopupLine />
        <MenuItem><MenuNewIcon /><span>新建单元格样式(<u>N</u>)...</span></MenuItem>
        <MenuItem><MenuNewIcon merge /><span>合并样式(<u>M</u>)...</span></MenuItem>
        <Grip>
          {[0, 0, 1, 0, 1, 1, 0, 0, 0].map((d, i) => <GripDot key={i} $show={d === 1} />)}
        </Grip>
      </Popup>

      <Annotation width="130" height="250" viewBox="0 0 130 250">
        <polygon points="125,15 125,40 120,36 9,247 111,32 106,30" fill="#fb3a3c" />
      </Annotation>
    </Page>
  );
}
